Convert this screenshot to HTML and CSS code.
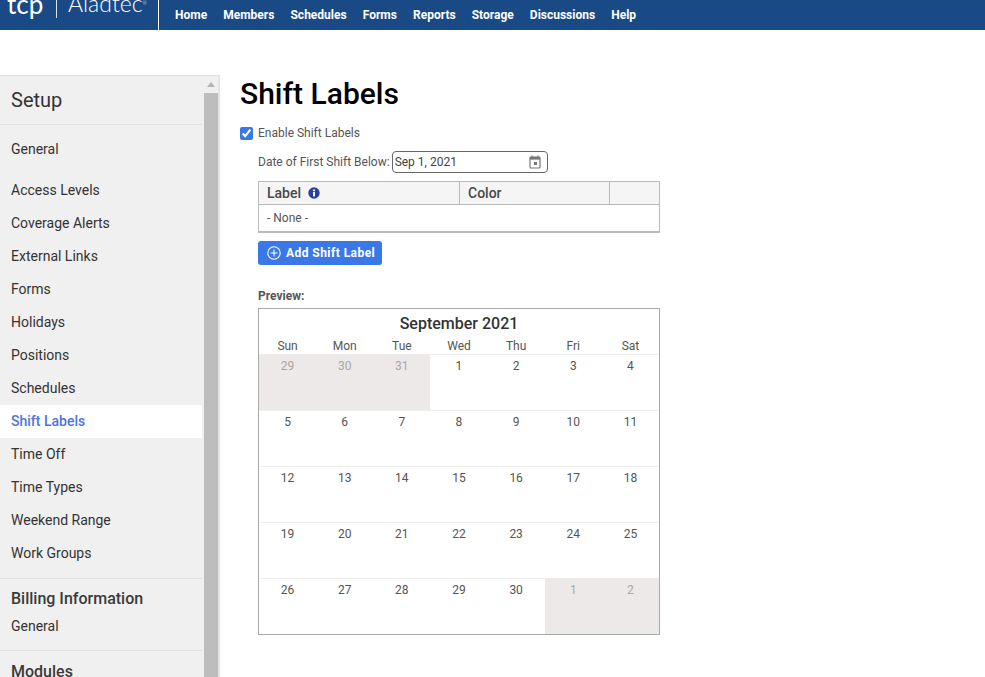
FILE: index.html
```html
<!DOCTYPE html>
<html lang="en">
<head>
<meta charset="utf-8">
<title>Shift Labels</title>
<link rel="stylesheet" href="styles.css">
</head>
<body>
<header class="topbar">
  <div class="logo">
    <span class="logo-tcp">tcp</span>
    <span class="logo-rule"></span>
    <span class="logo-name">Aladtec<sup class="logo-reg">®</sup></span>
  </div>
  <nav class="topnav">
    <a>Home</a><a>Members</a><a>Schedules</a><a>Forms</a><a>Reports</a><a>Storage</a><a>Discussions</a><a>Help</a>
  </nav>
</header>
<div class="page">
  <aside class="sidebar">
    <div class="side-content">
      <h2 class="side-title">Setup</h2>
      <div class="side-group side-group-first">
        <a class="side-link">General</a>
      </div>
      <div class="side-group side-group-list">
        <a class="side-link">Access Levels</a>
        <a class="side-link">Coverage Alerts</a>
        <a class="side-link">External Links</a>
        <a class="side-link">Forms</a>
        <a class="side-link">Holidays</a>
        <a class="side-link">Positions</a>
        <a class="side-link">Schedules</a>
        <a class="side-link active">Shift Labels</a>
        <a class="side-link">Time Off</a>
        <a class="side-link">Time Types</a>
        <a class="side-link">Weekend Range</a>
        <a class="side-link">Work Groups</a>
      </div>
      <div class="side-section">
        <h3 class="side-heading">Billing Information</h3>
        <a class="side-link side-link-short">General</a>
      </div>
      <div class="side-section side-section-last">
        <h3 class="side-heading">Modules</h3>
      </div>
    </div>
    <div class="scrollbar">
      <div class="scroll-arrow"></div>
      <div class="scroll-thumb"></div>
    </div>
  </aside>
  <main class="main">
    <h1 class="title">Shift Labels</h1>
    <label class="enable"><input class="enable-box" type="checkbox" checked> Enable Shift Labels</label>
    <div class="form-body">
      <div class="date-row">
        <span>Date of First Shift Below:</span>
        <div class="date-input">
          <span>Sep 1, 2021</span>
          <svg class="cal-icon" width="12" height="14" viewBox="0 0 12 14"><path d="M3 0.5v2.5M9 0.5v2.5" stroke="#777" stroke-width="1.3" fill="none"/><rect x="1" y="2" width="10" height="11" rx="1" fill="none" stroke="#777" stroke-width="1.2"/><rect x="1" y="2" width="10" height="2.6" fill="#777"/><rect x="5" y="7" width="3" height="3" fill="#777"/></svg>
        </div>
      </div>
      <table class="labels">
        <thead>
          <tr>
            <th class="col-label">Label <svg class="info" width="12" height="12" viewBox="0 0 12 12"><circle cx="6" cy="6" r="5.7" fill="#2340a8"/><rect x="5" y="5" width="2" height="4.4" fill="#fff"/><rect x="5" y="2.5" width="2" height="1.7" fill="#fff"/></svg></th>
            <th class="col-color">Color</th>
            <th></th>
          </tr>
        </thead>
        <tbody>
          <tr><td colspan="3">- None -</td></tr>
        </tbody>
      </table>
      <button class="add-btn" type="button">
        <svg width="14" height="14" viewBox="0 0 14 14"><circle cx="7" cy="7" r="6.2" fill="none" stroke="#fff" stroke-width="1.1"/><path d="M7 3.6v6.8M3.6 7h6.8" stroke="#fff" stroke-width="1.1"/></svg>
        Add Shift Label
      </button>
      <div class="preview-label">Preview:</div>
      <div class="calendar">
        <div class="cal-title">September 2021</div>
        <div class="cal-week cal-days">
          <span>Sun</span><span>Mon</span><span>Tue</span><span>Wed</span><span>Thu</span><span>Fri</span><span>Sat</span>
        </div>
        <div class="cal-week">
          <div class="day off">29</div><div class="day off">30</div><div class="day off">31</div><div class="day">1</div><div class="day">2</div><div class="day">3</div><div class="day">4</div>
        </div>
        <div class="cal-week">
          <div class="day">5</div><div class="day">6</div><div class="day">7</div><div class="day">8</div><div class="day">9</div><div class="day">10</div><div class="day">11</div>
        </div>
        <div class="cal-week">
          <div class="day">12</div><div class="day">13</div><div class="day">14</div><div class="day">15</div><div class="day">16</div><div class="day">17</div><div class="day">18</div>
        </div>
        <div class="cal-week">
          <div class="day">19</div><div class="day">20</div><div class="day">21</div><div class="day">22</div><div class="day">23</div><div class="day">24</div><div class="day">25</div>
        </div>
        <div class="cal-week">
          <div class="day">26</div><div class="day">27</div><div class="day">28</div><div class="day">29</div><div class="day">30</div><div class="day off">1</div><div class="day off">2</div>
        </div>
      </div>
    </div>
  </main>
</div>
</body>
</html>
```

FILE: styles.css
```css
* { box-sizing: border-box; }
html, body { margin: 0; height: 677px; overflow: hidden; background: #fff; }
body { font-family: Roboto, "Liberation Sans", sans-serif; font-size: 12px; color: #555; }

.topbar { display: flex; height: 30px; background: #1a4a85; }
.logo { width: 159px; height: 30px; overflow: hidden; border-right: 1px solid #fff; display: flex; align-items: flex-start; color: #fff; padding-left: 7px; }
.logo-tcp { font-family: Lato, sans-serif; font-size: 26px; line-height: 30px; margin-top: -11px; width: 49px; }
.logo-rule { width: 1px; height: 18px; background: #dfe6f0; }
.logo-name { font-family: Lato, sans-serif; font-weight: 300; font-size: 23px; line-height: 30px; margin-top: -12px; margin-left: 11px; }
.logo-reg { font-size: 5px; vertical-align: top; line-height: 30px; }
.topnav { display: flex; gap: 16.1px; padding-left: 16px; align-items: center; }
.topnav a { color: #fff; font-weight: 700; font-size: 12px; line-height: 30px; }

.page { display: flex; margin-top: 45px; height: 602px; }

.sidebar { width: 220px; flex: none; display: flex; background: #f0f0f0; border-top: 1px solid #e0e0e0; border-right: 2px solid #e4e4e4; overflow: hidden; padding-right: 1px; }
.side-content { width: 202px; flex: none; }
.side-title { margin: 0; height: 49px; line-height: 48px; padding-left: 11px; font-size: 20px; font-weight: 400; color: #333; border-bottom: 1px solid #e0e0e0; }
.side-group-first { padding-top: 8px; }
.side-group-list { padding-top: 8px; padding-bottom: 8px; }
.side-link { display: block; height: 33px; line-height: 33px; padding-left: 11px; font-size: 14px; color: #333; }
.side-link.active { background: #fff; color: #4a76e0; font-weight: 500; }
.side-section { border-top: 1px solid #e0e0e0; padding-top: 9px; padding-bottom: 7px; }
.side-section-last { padding-top: 10px; }
.side-heading { margin: 0; height: 22px; line-height: 22px; padding-left: 11px; font-size: 16px; font-weight: 500; color: #3a3a3a; }
.scrollbar { width: 14px; margin-left: 2px; flex: none; display: flex; flex-direction: column; }
.scroll-arrow { width: 0; height: 0; margin: 6px auto 6px; border-left: 4px solid transparent; border-right: 4px solid transparent; border-bottom: 5px solid #b4b4b4; }
.scroll-thumb { flex: 1; background: #bdbdbd; }

.main { padding-left: 20px; flex: 1; }
.title { margin: 0; height: 38px; line-height: 38px; font-size: 30px; font-weight: 500; color: #000; }
.enable { display: flex; align-items: center; gap: 5px; margin-top: 12px; height: 16px; font-size: 12px; }
.enable-box { margin: 0; width: 13px; height: 13px; accent-color: #3b78e7; }
.form-body { margin-left: 18px; width: 402px; }
.date-row { display: flex; align-items: center; gap: 2px; margin-top: 10px; height: 22px; }
.date-input { width: 156px; height: 22px; border: 1px solid #666; border-radius: 4px; padding: 0 3px 0 2px; display: flex; align-items: center; justify-content: space-between; color: #444; }
.cal-icon { margin-right: 3px; }
.labels { width: 402px; margin-top: 8px; border-collapse: collapse; table-layout: fixed; border: 1px solid #bbb; border-bottom-width: 2px; }
.labels th { height: 23px; padding: 0 8px; text-align: left; background: #f5f5f5; border: 1px solid #bbb; font-size: 14px; font-weight: 500; color: #484848; }
.col-label { width: 201px; }
.col-color { width: 150px; }
.info { vertical-align: -1px; margin-left: 3px; }
.labels td { height: 27px; padding: 0 8px; font-size: 12px; color: #555; }
.add-btn { display: flex; align-items: center; gap: 5px; margin-top: 8px; width: 124px; height: 24px; padding: 0 0 0 9px; border: 0; border-radius: 3px; background: #3b78e7; color: #fff; font-family: Roboto, sans-serif; font-size: 12px; font-weight: 700; letter-spacing: 0.45px; }
.preview-label { margin-top: 24px; height: 14px; line-height: 14px; font-weight: 700; font-size: 12px; color: #555; }
.calendar { margin-top: 5px; width: 402px; height: 327px; border: 1px solid #aaa; }
.cal-title { height: 28px; line-height: 29px; text-align: center; font-size: 16px; font-weight: 500; color: #333; }
.cal-week { display: grid; grid-template-columns: repeat(7, 1fr); }
.cal-days { height: 17px; line-height: 18px; text-align: center; color: #555; }
.day { height: 56px; border-top: 1px solid #eee; text-align: center; padding-top: 3px; line-height: 16px; font-size: 12px; color: #555; }
.day.off { background: #ece9e8; border-top-color: #ece9e8; color: #aaa6a6; }
```
